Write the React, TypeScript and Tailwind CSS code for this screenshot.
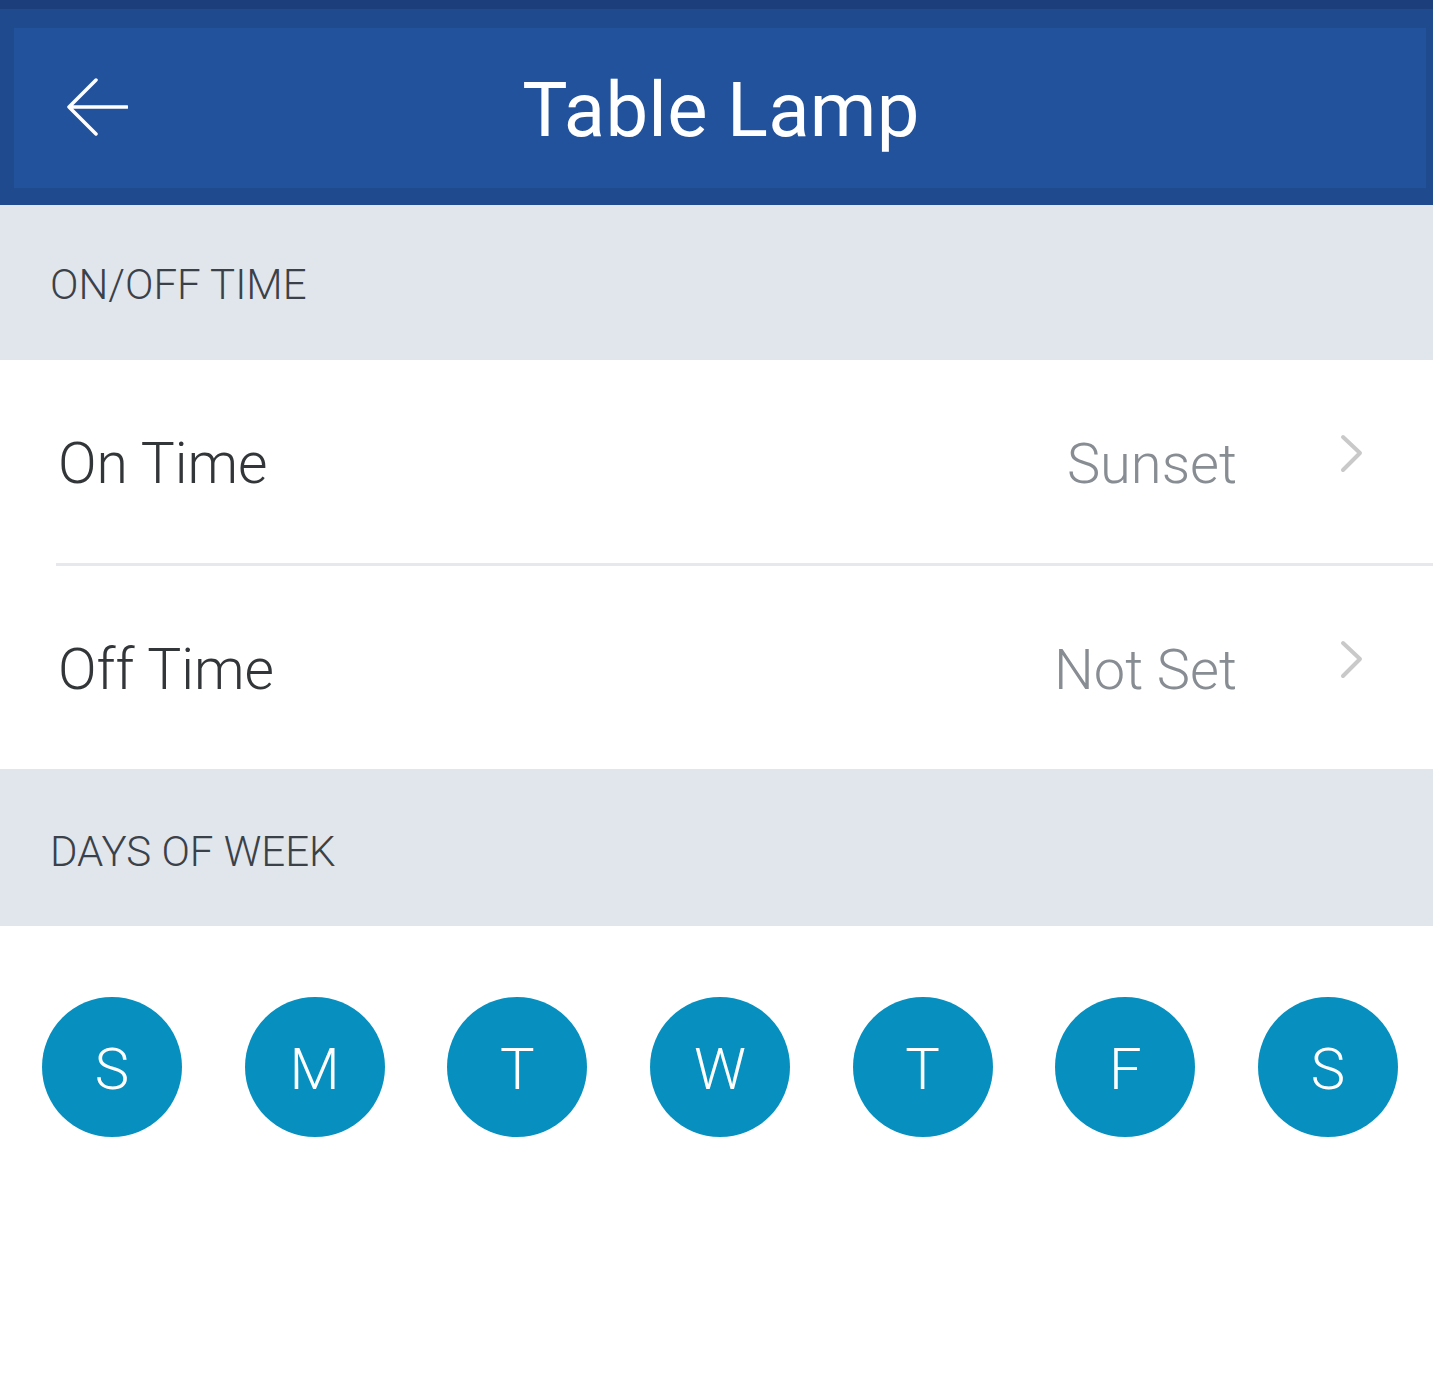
import React from "react";

const days = ["S", "M", "T", "W", "T", "F", "S"];

function Row({ label, value }: { label: string; value: string }) {
  return (
    <div className="flex h-[203px] items-center pl-[58px] pr-[68px] pt-[4px]">
      <span className="flex-1 text-[57px] font-light text-[#333639] leading-none">{label}</span>
      <span className="text-[56px] font-light text-[#878d93] leading-none mr-[102px]">{value}</span>
      <svg width="26" height="40" viewBox="0 0 26 40" className="-mt-[20px]">
        <path d="M4 3 L21 19 L4 36" fill="none" stroke="#c9c9c9" strokeWidth="4" strokeLinecap="round" strokeLinejoin="round" />
      </svg>
    </div>
  );
}

export default function App() {
  return (
    <div className="w-[1433px] h-[1381px] bg-white overflow-hidden" style={{ fontFamily: "Roboto, 'Noto Sans', sans-serif" }}>
      <div className="bg-[#1f4a8e] border-t-[9px] border-[#1c3f7c] pt-[19px] pb-[17px] pl-[14px] pr-[7px]">
        <div className="relative h-[160px] bg-[#22529c] flex items-center justify-center">
          <svg className="absolute left-[52px] top-[49px]" width="62" height="60" viewBox="0 0 62 60">
            <path d="M30 3 L3 30 L30 57 M3 30 L61 30" fill="none" stroke="white" strokeWidth="3.5" strokeLinecap="round" strokeLinejoin="round" />
          </svg>
          <span className="text-white text-[76px] leading-none tracking-[0.3px] ml-[2px] mt-[4px]">Table Lamp</span>
        </div>
      </div>
      <div className="h-[155px] bg-[#e1e6ec] flex items-center pl-[50px] pt-[4px]">
        <span className="text-[42px] font-light text-[#3b4149] leading-none">ON/OFF TIME</span>
      </div>
      <Row label="On Time" value="Sunset" />
      <div className="ml-[56px] h-[3px] bg-[#e6e8ec]" />
      <Row label="Off Time" value="Not Set" />
      <div className="h-[157px] bg-[#e1e6ec] flex items-center pl-[50px] pt-[8px]">
        <span className="text-[42px] font-light text-[#3b4149] leading-none">DAYS OF WEEK</span>
      </div>
      <div className="flex justify-between pl-[42px] pr-[35px] pt-[71px]">
        {days.map((d, i) => (
          <div key={i} className="w-[140px] h-[140px] rounded-full bg-[#0790bf] flex items-center justify-center">
            <span className="text-white text-[58px] font-light leading-none mt-[4px]">{d}</span>
          </div>
        ))}
      </div>
    </div>
  );
}
